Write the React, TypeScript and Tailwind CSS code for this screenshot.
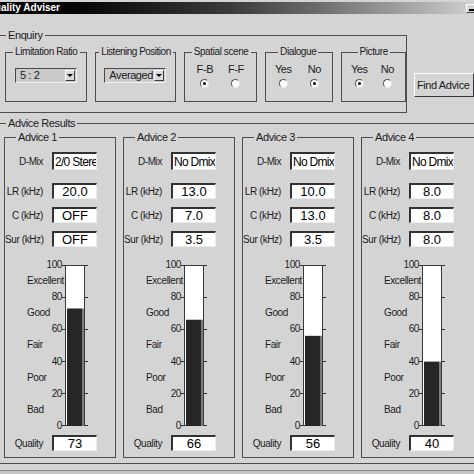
import type { ReactNode } from "react";
import clsx from "clsx";

const advices = [
  { n: 1, dmix: "2/0 Stereo", lr: "20.0", c: "OFF", sur: "OFF", q: 73 },
  { n: 2, dmix: "No Dmix", lr: "13.0", c: "7.0", sur: "3.5", q: 66 },
  { n: 3, dmix: "No Dmix", lr: "10.0", c: "13.0", sur: "3.5", q: 56 },
  { n: 4, dmix: "No Dmix", lr: "8.0", c: "8.0", sur: "8.0", q: 40 },
];

const scale = ["100", "Excellent", "80", "Good", "60", "Fair", "40", "Poor", "20", "Bad", "0"];

function Group({
  legend,
  className,
  legendClass,
  children,
}: {
  legend: string;
  className?: string;
  legendClass?: string;
  children: ReactNode;
}) {
  return (
    <fieldset className={clsx("min-w-0 border border-[#4d4d4d]", className)}>
      <legend className={clsx("px-[2px] leading-[14px] whitespace-nowrap", legendClass)}>{legend}</legend>
      {children}
    </fieldset>
  );
}

function Combo({ value, className }: { value: string; className?: string }) {
  return (
    <div
      className={clsx(
        "flex h-[15px] w-[62px] items-center border border-t-[#4a4a4a] border-l-[#4a4a4a] border-b-[#f2f2f2] border-r-[#f2f2f2] bg-[#cbcbcb]",
        className
      )}
    >
      <span className="flex-1 pl-[4px] text-[11px] leading-[13px] whitespace-nowrap">{value}</span>
      <span className="mr-[1px] flex h-[11px] w-[10px] items-center justify-center border border-t-white border-l-white border-b-[#3a3a3a] border-r-[#3a3a3a] bg-[#dadada]">
        <span className="h-0 w-0 border-x-[3px] border-t-[3px] border-x-transparent border-t-black" />
      </span>
    </div>
  );
}

function Radio({ label, checked }: { label: string; checked?: boolean }) {
  return (
    <div className="flex w-[24px] flex-col items-center">
      <span className="mt-[4px] text-[11px] leading-[13px]">{label}</span>
      <span className="mt-[3px] flex h-[9px] w-[9px] items-center justify-center rounded-full border border-t-[#555] border-l-[#555] border-b-[#e6e6e6] border-r-[#e6e6e6] bg-white">
        {checked && <span className="h-[3px] w-[3px] rounded-full bg-black" />}
      </span>
    </div>
  );
}

function ValueBox({ value, left, className }: { value: string; left?: boolean; className?: string }) {
  return (
    <div
      className={clsx(
        "ml-[9px] w-[45px] overflow-hidden whitespace-nowrap border-l-2 border-t-2 border-b border-r border-l-[#333] border-t-[#333] border-b-[#ededed] border-r-[#ededed] bg-white leading-[14px] text-black",
        left ? "pl-[1px] text-[12px] tracking-[-0.7px]" : "text-center text-[13px] tracking-[0px]",
        className
      )}
    >
      {value}
    </div>
  );
}

function Row({ label, children, className }: { label: string; children: ReactNode; className?: string }) {
  return (
    <div className={clsx("flex items-center", className)}>
      <span className="w-[38px] text-right whitespace-nowrap">{label}</span>
      {children}
    </div>
  );
}

function Chart({ q }: { q: number }) {
  const fillH = (161 * q) / 100;
  return (
    <div className="mt-[10px] flex">
      <div className="ml-[22px] flex w-[35px] flex-col tracking-[-0.4px]">
        {scale.map((s, i) => (
          <span
            key={s}
            className={clsx("h-[16.1px] leading-[16px] whitespace-nowrap", i % 2 === 0 ? "text-right" : "text-left")}
          >
            {s}
          </span>
        ))}
      </div>
      <svg width="27" height="177" className="shrink-0">
        <rect x="3.5" y="8.5" width="19" height="160" fill="#fff" stroke="#3a3a3a" />
        <rect x="5" y={169 - fillH} width="15" height={fillH} fill="#262626" />
        <rect x="20" y={169 - fillH} width="2" height={fillH} fill="#7c7c7c" />
        {[0, 1, 2, 3, 4, 5].map((i) => (
          <g key={i} stroke="#333">
            <line x1="0" x2="3" y1={8.5 + 32 * i} y2={8.5 + 32 * i} />
            <line x1="23" x2="26" y1={8.5 + 32 * i} y2={8.5 + 32 * i} />
          </g>
        ))}
      </svg>
    </div>
  );
}

export default function App() {
  return (
    <div className="h-[474px] w-[474px] overflow-hidden bg-[#d4d4d4] font-['Liberation_Sans',Arial,sans-serif] text-[10px] tracking-[-0.4px] text-[#1c1c1c]">
      <div className="pt-[2px]">
        <div className="flex h-[12px] items-center overflow-hidden bg-linear-to-r from-black via-[#3e3e3e] to-[#d0d0d0]">
          <span className="-ml-[13px] whitespace-nowrap text-[10px] leading-[12px] font-bold tracking-[0px] text-white">
            Quality Adviser
          </span>
          <span className="mr-[-6px] ml-auto flex h-[9px] w-[14px] items-end justify-center border border-t-white border-l-white border-b-[#444] border-r-[#444] bg-[#d4d4d4]">
            <span className="mb-[1px] ml-[-4px] h-[2px] w-[5px] bg-black" />
          </span>
        </div>
      </div>

      <div className="-ml-[4px]">
        <div className="mt-[14px] flex items-start">
          <Group
            legend="Enquiry"
            className="w-[425px] pt-[3px] pb-[10px] pl-[8px]"
            legendClass="ml-[1px] text-[11px]"
          >
            <div className="flex gap-[8px] text-[10px]">
              <Group legend="Limitation Ratio" className="h-[57px] w-[83px]" legendClass="ml-[7px]">
                <Combo value="5 : 2" className="mt-[9px] ml-[9px]" />
              </Group>
              <Group legend="Listening Position" className="h-[57px] w-[81px]" legendClass="ml-[3px] tracking-[-0.5px]">
                <Combo value="Averaged" className="mt-[9px] ml-[8px]" />
              </Group>
              <Group legend="Spatial scene" className="h-[57px] w-[74px]" legendClass="ml-[7px]">
                <div className="flex justify-center gap-[7px]">
                  <Radio label="F-B" checked />
                  <Radio label="F-F" />
                </div>
              </Group>
              <Group legend="Dialogue" className="h-[57px] w-[68px]" legendClass="ml-[12px]">
                <div className="flex justify-center gap-[7px]">
                  <Radio label="Yes" />
                  <Radio label="No" checked />
                </div>
              </Group>
              <Group legend="Picture" className="h-[57px] w-[66px]" legendClass="ml-[16px]">
                <div className="flex justify-center gap-[4px]">
                  <Radio label="Yes" checked />
                  <Radio label="No" />
                </div>
              </Group>
            </div>
          </Group>
          <button
            type="button"
            className="mt-[45px] ml-[7px] h-[24px] w-[60px] shrink-0 border border-t-white border-l-white border-b-[#3a3a3a] border-r-[#3a3a3a] bg-[#d4d4d4] pl-[2px] text-left text-[11px] whitespace-nowrap text-[#1c1c1c]"
          >
            Find Advice
          </button>
        </div>

        <Group
          legend="Advice Results"
          className="mt-[3px] w-[500px] pb-[5px] pl-[7px]"
          legendClass="ml-[2px] text-[11px]"
        >
          <div className="flex gap-[7px]">
            {advices.map((a) => (
              <Group
                key={a.n}
                legend={`Advice ${a.n}`}
                className={clsx("pb-[6px]", a.n === 4 ? "w-[125px]" : "w-[112px]")}
                legendClass="ml-[11px] text-[11px]"
              >
                <Row label="D-Mix" className="mt-[8px]">
                  <ValueBox value={a.dmix} left className="h-[18px] leading-[16px]" />
                </Row>
                <Row label="LR (kHz)" className="mt-[13px]">
                  <ValueBox value={a.lr} className="h-[16px]" />
                </Row>
                <Row label="C  (kHz)" className="mt-[8px]">
                  <ValueBox value={a.c} className="h-[16px]" />
                </Row>
                <Row label="Sur (kHz)" className="mt-[8px]">
                  <ValueBox value={a.sur} className="h-[16px]" />
                </Row>
                <Chart q={a.q} />
                <Row label="Quality" className="mt-[1px]">
                  <ValueBox value={String(a.q)} className="h-[16px]" />
                </Row>
              </Group>
            ))}
          </div>
        </Group>
      </div>
      <div className="mt-[6px] h-[10px] border-t border-[#8a8a8a] bg-[#c6c6c6]" />
    </div>
  );
}
